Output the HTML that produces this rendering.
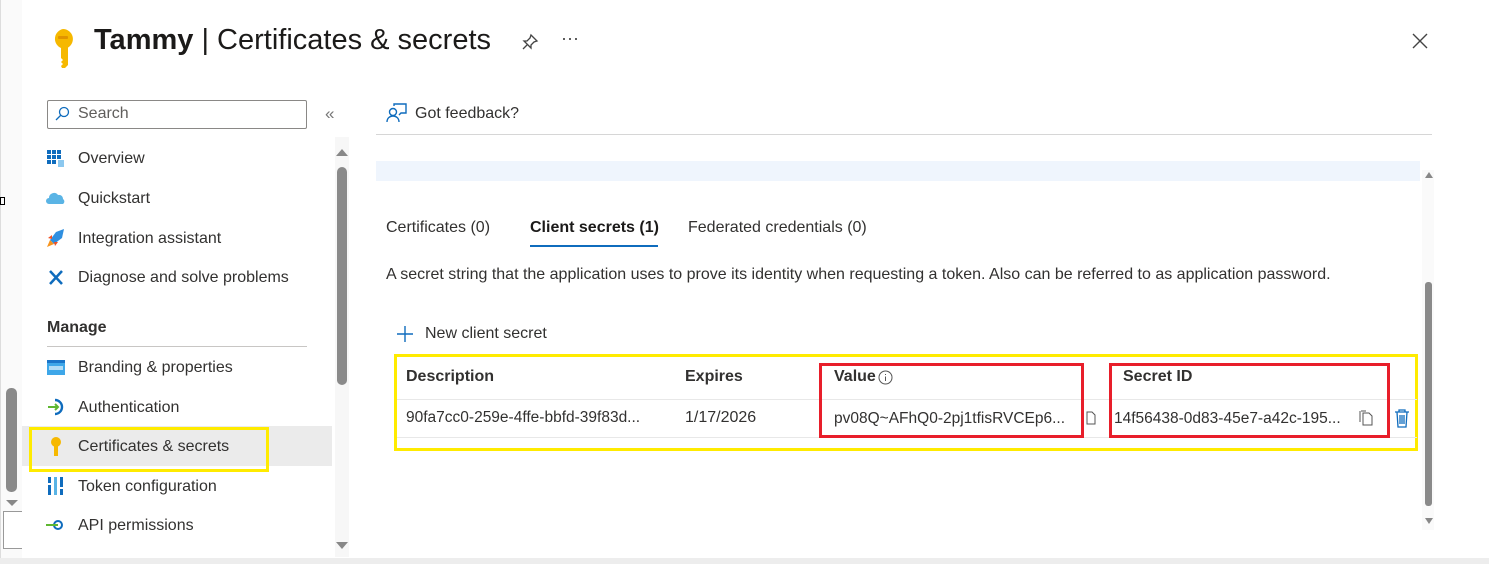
<!DOCTYPE html>
<html><head><meta charset="utf-8"><style>
*{margin:0;padding:0;box-sizing:border-box}
body{width:1489px;height:564px;position:relative;overflow:hidden;background:#fff;font-family:"Liberation Sans",sans-serif;color:#323130}
.a{position:absolute;white-space:nowrap}
.n{font-size:16px;color:#323130}
.ic{position:absolute}
</style></head><body>
<div class="a" style="left:0;top:0;width:22px;height:558px;background:#fafafa;border-left:1px solid #ddd"></div>
<div class="a" style="left:0;top:197px;width:5px;height:8px;border:1px solid #000"></div>
<div class="a" style="left:6px;top:388px;width:11px;height:104px;background:#8a8a8a;border-radius:5px"></div>
<div class="a" style="left:6px;top:500px;width:0;height:0;border-left:6px solid transparent;border-right:6px solid transparent;border-top:6px solid #888"></div>
<div class="a" style="left:3px;top:511px;width:19px;height:38px;border:1px solid #999;border-right:none;background:#fff"></div>
<div class="a" style="left:0;top:558px;width:1489px;height:6px;background:#ededed"></div>

<!-- header -->
<svg class="ic" style="left:50px;top:27px" width="26" height="42" viewBox="0 0 26 42"><path d="M13 2a10 10 0 0 1 5 18.6V38l-3 3h-3l-1-2 2-2-2-2 2-2-2-2v-10A10 10 0 0 1 13 2z" fill="#f6b800"/><rect x="8" y="9" width="10" height="3" rx="1" fill="#e09400"/></svg>
<div class="a" style="left:94px;top:24px;font-size:29px;color:#1b1a19"><b>Tammy</b> | Certificates &amp; secrets</div>
<svg class="ic" style="left:521px;top:33px" width="18" height="18" viewBox="0 0 18 18" fill="none" stroke="#444" stroke-width="1.3"><path d="M10 2l6 6-3 1-3 3 0 3-7-7 3 0 3-3z M6 12l-4 4"/></svg>
<div class="a" style="left:561px;top:28px;font-size:18px;color:#444">···</div>
<svg class="ic" style="left:1411px;top:32px" width="18" height="18" viewBox="0 0 18 18" stroke="#444" stroke-width="1.4"><path d="M2 2l14 14M16 2L2 16"/></svg>

<!-- search -->
<div class="a" style="left:47px;top:100px;width:260px;height:29px;border:1px solid #8a8886;border-radius:2px"></div>
<svg class="ic" style="left:54px;top:106px" width="16" height="16" viewBox="0 0 16 16" fill="none" stroke="#0f6cbd" stroke-width="1.3"><circle cx="10" cy="6" r="4.5"/><path d="M7 9l-5 5"/></svg>
<div class="a n" style="left:78px;top:105px;color:#605e5c">Search</div>
<div class="a" style="left:325px;top:104px;font-size:17px;color:#777">«</div>

<!-- nav scrollbar -->
<div class="a" style="left:335px;top:137px;width:14px;height:420px;background:#f7f7f7"></div>
<div class="a" style="left:336px;top:149px;border-left:6px solid transparent;border-right:6px solid transparent;border-bottom:7px solid #888"></div>
<div class="a" style="left:337px;top:167px;width:10px;height:218px;background:#8a8a8a;border-radius:5px"></div>
<div class="a" style="left:336px;top:542px;border-left:6px solid transparent;border-right:6px solid transparent;border-top:7px solid #888"></div>

<!-- nav -->
<div class="a" style="left:22px;top:426px;width:310px;height:40px;background:#ebebeb"></div>
<div class="a" style="left:29px;top:427px;width:240px;height:45px;border:3px solid #ffeb00"></div>

<svg class="ic" style="left:47px;top:150px" width="18" height="18"><g fill="#0f6cbd"><rect x="0" y="0" width="4" height="4"/><rect x="5" y="0" width="4" height="4"/><rect x="10" y="0" width="4" height="4"/><rect x="0" y="5" width="4" height="4"/><rect x="5" y="5" width="4" height="4"/><rect x="10" y="5" width="4" height="4"/><rect x="0" y="10" width="4" height="4"/><rect x="5" y="10" width="4" height="4"/></g><rect x="11" y="10" width="6" height="7" fill="#8cc8ef"/></svg>
<div class="a n" style="left:78px;top:150px">Overview</div>
<svg class="ic" style="left:46px;top:191px" width="20" height="14"><path d="M3 13a3 3 0 0 1 0-6 5 5 0 0 1 9-3 4 4 0 0 1 5 4 3 3 0 0 1 0 5z" fill="#5ab4e5"/></svg>
<div class="a n" style="left:78px;top:190px">Quickstart</div>
<svg class="ic" style="left:46px;top:228px" width="20" height="20"><path d="M18 1l-8 3-6 8 4 4 8-6z" fill="#2f8fe0"/><path d="M4 12l-3 7 7-3z" fill="#f7941d"/><path d="M2 10l4-3 0 4zM9 18l3-4-4 0z" fill="#f25022"/></svg>
<div class="a n" style="left:78px;top:230px">Integration assistant</div>
<svg class="ic" style="left:47px;top:268px" width="18" height="18" stroke="#0f6cbd" stroke-width="2.5" fill="none"><path d="M3 16L15 3M3 3l12 13"/></svg>
<div class="a n" style="left:78px;top:269px">Diagnose and solve problems</div>
<div class="a n" style="left:47px;top:319px;font-weight:bold;color:#323130">Manage</div>
<div class="a" style="left:47px;top:346px;width:260px;height:1px;background:#c8c6c4"></div>
<svg class="ic" style="left:47px;top:360px" width="18" height="15"><rect width="18" height="15" fill="#3ea7e9"/><rect x="0" y="0" width="18" height="3" fill="#1a75c9"/><rect x="2" y="6" width="14" height="4" fill="#fff" opacity=".6"/></svg>
<div class="a n" style="left:78px;top:359px">Branding &amp; properties</div>
<svg class="ic" style="left:47px;top:398px" width="18" height="18" fill="none"><path d="M8 2a7 7 0 1 1 0 14" stroke="#0f6cbd" stroke-width="2.4"/><path d="M1 9h10M8 6l3 3-3 3" stroke="#5fb731" stroke-width="2"/></svg>
<div class="a n" style="left:78px;top:399px">Authentication</div>
<svg class="ic" style="left:50px;top:437px" width="12" height="20"><circle cx="6" cy="5" r="5" fill="#f6b800"/><rect x="4" y="8" width="4" height="11" fill="#f6b800"/></svg>
<div class="a n" style="left:78px;top:438px">Certificates &amp; secrets</div>
<svg class="ic" style="left:47px;top:477px" width="18" height="18"><rect x="1" y="0" width="3" height="18" fill="#0f6cbd"/><rect x="7" y="0" width="3" height="18" fill="#5ab4e5"/><rect x="13" y="0" width="3" height="18" fill="#0f6cbd"/><rect x="0" y="6" width="5" height="2" fill="#fff"/><rect x="12" y="10" width="5" height="2" fill="#fff"/></svg>
<div class="a n" style="left:78px;top:478px">Token configuration</div>
<svg class="ic" style="left:46px;top:518px" width="20" height="14" fill="none"><circle cx="12" cy="7" r="4" stroke="#0f6cbd" stroke-width="2"/><path d="M0 7h12" stroke="#5fb731" stroke-width="2"/></svg>
<div class="a n" style="left:78px;top:517px">API permissions</div>

<!-- right -->
<svg class="ic" style="left:386px;top:103px" width="22" height="20" fill="none" stroke="#0f6cbd" stroke-width="1.4"><circle cx="7" cy="9" r="3.5"/><path d="M1 19c0-4 3-6 6-6s6 2 6 6M8 3V1h12v9h-5l-2 2"/></svg>
<div class="a n" style="left:415px;top:105px">Got feedback?</div>
<div class="a" style="left:376px;top:134px;width:1056px;height:1px;background:#d6d6d6"></div>
<div class="a" style="left:376px;top:161px;width:1044px;height:20px;background:#eff5fd"></div>
<div class="a" style="left:1422px;top:170px;width:12px;height:360px;background:#fafafa"></div>
<div class="a" style="left:1425px;top:172px;border-left:4px solid transparent;border-right:4px solid transparent;border-bottom:6px solid #888"></div>
<div class="a" style="left:1425px;top:282px;width:7px;height:224px;background:#8a8a8a;border-radius:3px"></div>
<div class="a" style="left:1425px;top:518px;border-left:4px solid transparent;border-right:4px solid transparent;border-top:6px solid #888"></div>

<div class="a n" style="left:386px;top:219px;color:#323130">Certificates (0)</div>
<div class="a n" style="left:530px;top:219px;color:#1b1a19;font-weight:bold">Client secrets (1)</div>
<div class="a" style="left:530px;top:245px;width:128px;height:2px;background:#0f6cbd"></div>
<div class="a n" style="left:688px;top:219px">Federated credentials (0)</div>
<div class="a n" style="left:386px;top:266px">A secret string that the application uses to prove its identity when requesting a token. Also can be referred to as application password.</div>
<svg class="ic" style="left:396px;top:325px" width="18" height="18" stroke="#0f6cbd" stroke-width="1.4"><path d="M9 1v16M1 9h16"/></svg>
<div class="a n" style="left:425px;top:325px">New client secret</div>

<!-- table -->
<div class="a" style="left:394px;top:354px;width:1024px;height:97px;border:3px solid #ffeb00"></div>
<div class="a" style="left:397px;top:399px;width:1020px;height:1px;background:#e8e8e8"></div>
<div class="a" style="left:397px;top:437px;width:1020px;height:1px;background:#e8e8e8"></div>
<div class="a n" style="left:406px;top:368px;font-weight:bold">Description</div>
<div class="a n" style="left:685px;top:368px;font-weight:bold">Expires</div>
<div class="a n" style="left:834px;top:368px;font-weight:bold">Value</div>
<svg class="ic" style="left:878px;top:370px" width="15" height="15" fill="none" stroke="#555"><circle cx="7.5" cy="7.5" r="6.5"/><path d="M7.5 6.5v4.5M7.5 4v1"/></svg>
<div class="a n" style="left:1123px;top:368px;font-weight:bold">Secret ID</div>
<div class="a n" style="left:406px;top:409px;font-size:15.5px">90fa7cc0-259e-4ffe-bbfd-39f83d...</div>
<div class="a n" style="left:685px;top:409px">1/17/2026</div>
<div class="a n" style="left:834px;top:410px;font-size:15.5px">pv08Q~AFhQ0-2pj1tfisRVCEp6...</div>
<div class="a n" style="left:1114px;top:410px;font-size:15.5px">14f56438-0d83-45e7-a42c-195...</div>
<svg class="ic" style="left:1084px;top:411px" width="12" height="14" fill="none" stroke="#555"><path d="M3 1h5l3 3v9H3z"/></svg>
<svg class="ic" style="left:1359px;top:410px" width="14" height="16" fill="none" stroke="#555"><path d="M4 3h6l3 3v9H4zM2 1h5M1 1v11"/></svg>
<svg class="ic" style="left:1394px;top:408px" width="16" height="20" fill="none" stroke="#0f6cbd" stroke-width="1.3"><path d="M1 4h14M5 4V2h6v2M3 4l1 15h8l1-15M6 7v9M8 7v9M10 7v9"/></svg>
<div class="a" style="left:819px;top:363px;width:265px;height:75px;border:3px solid #e81e2a"></div>
<div class="a" style="left:1109px;top:363px;width:281px;height:75px;border:3px solid #e81e2a"></div>
</body></html>
